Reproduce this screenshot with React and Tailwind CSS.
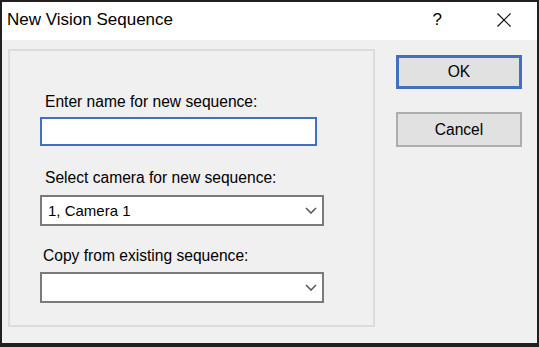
import React from "react";

const Combo = ({ value }) => {
  return (
    <div className="w-[284px] h-[31px] bg-white border-2 border-[#7a7a7a] flex items-center justify-between pl-[6px] pr-[5px]">
      <span className="leading-[20px] text-[15px]">{value}</span>
      <svg width="12" height="7" viewBox="0 0 12 7" className="shrink-0">
        <polyline points="1,1 6,6 11,1" fill="none" stroke="#5a5a5a" strokeWidth="1.6" />
      </svg>
    </div>
  );
};

export default function App() {
  return (
    <div
      className="w-[539px] h-[347px] flex flex-col border-t-2 border-x-2 border-b-4 border-[#231f20] text-[15.6px] text-black"
      style={{ fontFamily: '"Liberation Sans", Arial, sans-serif' }}
    >
      {/* Title bar */}
      <div className="h-[38px] bg-white flex items-start pt-[8px] pl-[5px] pr-[26px] text-[17px]">
        <span className="flex-1 leading-[20px]">New Vision Sequence</span>
        <span className="leading-[20px] mr-[55px]">?</span>
        <svg width="14" height="14" viewBox="0 0 14 14" className="mt-[3px]">
          <path d="M0.5 0.5 L13.5 13.5 M13.5 0.5 L0.5 13.5" stroke="#111" strokeWidth="1.2" />
        </svg>
      </div>

      {/* Body */}
      <div className="flex-1 bg-[#f0f0f0] flex items-start pl-[6px] pt-[9px]">
        <div className="w-[367px] h-[278px] border-2 border-[#dcdcdc] flex flex-col items-start pl-[30px] pt-[41px]">
          <div className="ml-[5px] leading-[20px]">Enter name for new sequence:</div>
          <div className="mt-[5px] w-[277px] h-[29px] bg-white border-2 border-[#4170c2]" />

          <div className="mt-[22px] ml-[5px] leading-[20px]">Select camera for new sequence:</div>
          <div className="mt-[7px]">
            <Combo value="1, Camera 1" />
          </div>

          <div className="mt-[20px] ml-[3px] leading-[20px]">Copy from existing sequence:</div>
          <div className="mt-[6px]">
            <Combo value="" />
          </div>
        </div>

        <div className="ml-[21px] mt-[6px] flex flex-col">
          <button className="w-[126px] h-[34px] bg-[#e1e1e1] border-[3px] border-[#4170c2] leading-[20px]">
            OK
          </button>
          <button className="mt-[23px] w-[126px] h-[35px] bg-[#e1e1e1] border-2 border-[#adadad] leading-[20px]">
            Cancel
          </button>
        </div>
      </div>
    </div>
  );
}
